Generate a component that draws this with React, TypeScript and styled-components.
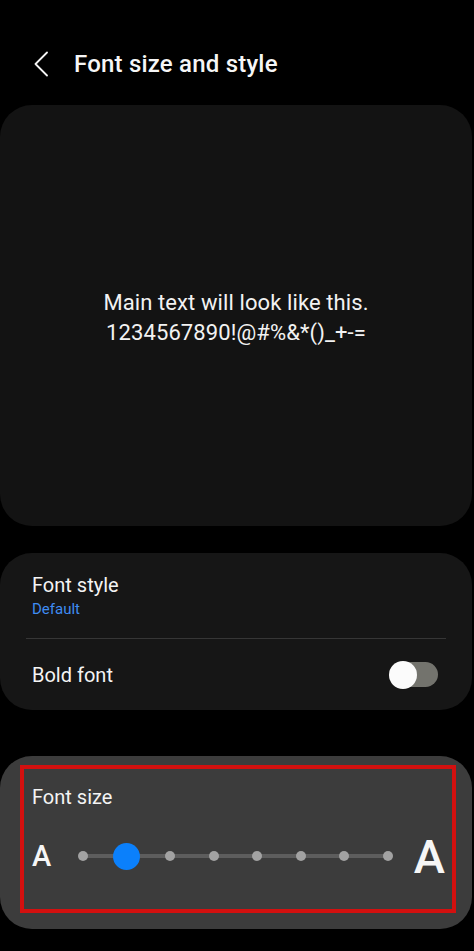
import React from "react";
import styled, { createGlobalStyle } from "styled-components";

const Global = createGlobalStyle`
  html, body {
    margin: 0;
    padding: 0;
    background: #000;
  }
  body {
    font-family: Roboto, "Noto Sans", "Liberation Sans", sans-serif;
    color: #f4f4f4;
    -webkit-font-smoothing: antialiased;
  }
  * { box-sizing: border-box; }
`;

const Screen = styled.div`
  width: 474px;
  height: 951px;
  background: #000;
  display: flex;
  flex-direction: column;
  overflow: hidden;
`;

const Header = styled.header`
  height: 105px;
  padding: 23px 0 0 33px;
  display: flex;
  align-items: center;
  gap: 25px;
`;

const BackButton = styled.button`
  width: 16px;
  height: 26px;
  padding: 0;
  border: 0;
  background: none;
  display: flex;
  align-items: center;
  justify-content: center;
  cursor: pointer;
`;

const Title = styled.h1`
  margin: 0;
  font-size: 24px;
  font-weight: 500;
  letter-spacing: 0.2px;
  color: #f6f6f6;
`;

const Card = styled.section<{ $bg: string }>`
  width: 472px;
  background: ${(p) => p.$bg};
  border-radius: 32px;
`;

const PreviewCard = styled(Card)`
  height: 421px;
  display: flex;
  align-items: center;
  justify-content: center;
  text-align: center;
`;

const PreviewText = styled.p`
  margin: 4px 0 0;
  font-size: 22px;
  line-height: 30px;
  letter-spacing: 0.1px;
  color: #f2f2f2;
`;

const SettingsCard = styled(Card)`
  margin-top: 27px;
  height: 157px;
  display: flex;
  flex-direction: column;
`;

const StyleRow = styled.div`
  padding: 20px 32px 20px;
  display: flex;
  flex-direction: column;
`;

const RowTitle = styled.div`
  font-size: 20px;
  line-height: 24px;
  color: #f4f4f4;
`;

const RowValue = styled.div`
  margin-top: 3px;
  font-size: 15px;
  line-height: 18px;
  color: #3f8cf2;
`;

const Divider = styled.hr`
  margin: 0 26px;
  border: 0;
  height: 1px;
  background: #363636;
`;

const ToggleRow = styled.div`
  flex: 1;
  padding: 0 34px 0 32px;
  display: flex;
  align-items: center;
  justify-content: space-between;
`;

const Switch = styled.div<{ $on: boolean }>`
  position: relative;
  width: 48px;
  height: 25px;
  border-radius: 13px;
  background: ${(p) => (p.$on ? "#3e91ff" : "#73736d")};
`;

const SwitchKnob = styled.span<{ $on: boolean }>`
  position: absolute;
  top: -1.5px;
  left: ${(p) => (p.$on ? "21px" : "-1px")};
  width: 28px;
  height: 28px;
  border-radius: 50%;
  background: #fbfbfb;
`;

const SizeCard = styled(Card)`
  margin-top: 46px;
  height: 173px;
  padding: 9px 16px 16px 20px;
`;

const Highlight = styled.div`
  height: 148px;
  border: 4px solid #d3100f;
  padding: 16px 7px 0 8px;
  display: flex;
  flex-direction: column;
`;

const SliderRow = styled.div`
  margin-top: 27px;
  height: 40px;
  display: flex;
  align-items: center;
`;

const Glyph = styled.span<{ $size: number }>`
  font-size: ${(p) => p.$size}px;
  font-weight: 500;
  line-height: 1;
  color: #f6f6f6;
`;

const Track = styled.div`
  position: relative;
  flex: 1;
  margin: 0 21px 0 27px;
  display: flex;
  align-items: center;
  justify-content: space-between;
  &::before {
    content: "";
    position: absolute;
    left: 5px;
    right: 5px;
    top: 50%;
    height: 4px;
    margin-top: -2px;
    background: #5d5d5d;
  }
`;

const Stop = styled.span<{ $active: boolean }>`
  position: relative;
  flex: none;
  width: ${(p) => (p.$active ? 27 : 10)}px;
  height: ${(p) => (p.$active ? 27 : 10)}px;
  margin: 0 ${(p) => (p.$active ? -8.5 : 0)}px;
  border-radius: 50%;
  background: ${(p) => (p.$active ? "#0b80fb" : "#a2a2a2")};
`;

const stops = [0, 1, 2, 3, 4, 5, 6, 7];
const current = 1;

export default function App() {
  return (
    <>
      <Global />
      <Screen>
        <Header>
          <BackButton aria-label="Back">
            <svg width="14" height="26" viewBox="0 0 14 26" fill="none">
              <path d="M13 1.5 L1.5 13 L13 24.5" stroke="#f4f4f4" strokeWidth="1.8" strokeLinecap="round" strokeLinejoin="round" />
            </svg>
          </BackButton>
          <Title>Font size and style</Title>
        </Header>

        <PreviewCard $bg="#131313">
          <PreviewText>
            Main text will look like this.
            <br />
            1234567890!@#%&amp;*()_+-=
          </PreviewText>
        </PreviewCard>

        <SettingsCard $bg="#161616">
          <StyleRow>
            <RowTitle>Font style</RowTitle>
            <RowValue>Default</RowValue>
          </StyleRow>
          <Divider />
          <ToggleRow>
            <RowTitle>Bold font</RowTitle>
            <Switch $on={false}>
              <SwitchKnob $on={false} />
            </Switch>
          </ToggleRow>
        </SettingsCard>

        <SizeCard $bg="#3c3c3c">
          <Highlight>
            <RowTitle>Font size</RowTitle>
            <SliderRow>
              <Glyph $size={29}>A</Glyph>
              <Track>
                {stops.map((s) => (
                  <Stop key={s} $active={s === current} />
                ))}
              </Track>
              <Glyph $size={47}>A</Glyph>
            </SliderRow>
          </Highlight>
        </SizeCard>
      </Screen>
    </>
  );
}
